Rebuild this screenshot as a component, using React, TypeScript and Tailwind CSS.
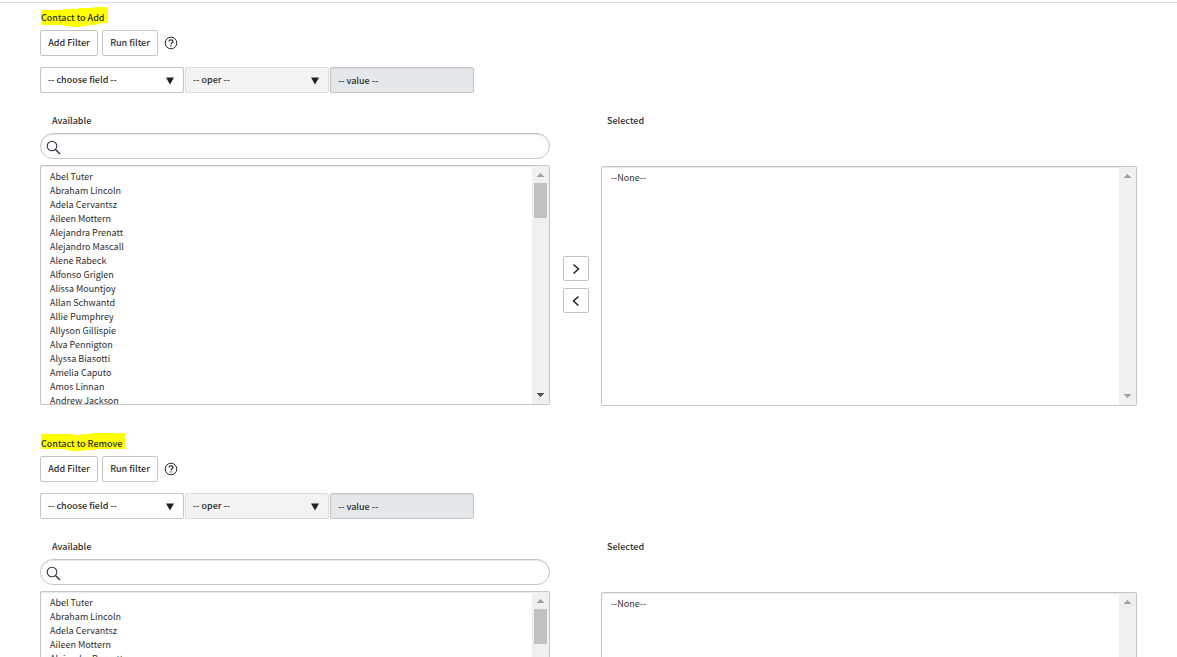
import { useId } from 'react';

const contacts = [
  'Abel Tuter',
  'Abraham Lincoln',
  'Adela Cervantsz',
  'Aileen Mottern',
  'Alejandra Prenatt',
  'Alejandro Mascall',
  'Alene Rabeck',
  'Alfonso Griglen',
  'Alissa Mountjoy',
  'Allan Schwantd',
  'Allie Pumphrey',
  'Allyson Gillispie',
  'Alva Pennigton',
  'Alyssa Biasotti',
  'Amelia Caputo',
  'Amos Linnan',
  'Andrew Jackson',
];

function AddMarker() {
  return (
    <svg className="absolute left-0 top-0 -z-10" width="67" height="22" viewBox="0 0 67 22" aria-hidden="true">
      <path d="M0 3H22V2H37V1H51L54 0H67V16H61L54 18H47V19H42L40 20H31L28 19H22V18H0Z" fill="#ffff00" />
    </svg>
  );
}

function RemoveMarker() {
  return (
    <svg className="absolute left-0 top-0 -z-10" width="84" height="20" viewBox="0 0 84 20" aria-hidden="true">
      <path d="M0 1H33V2H40V1H51V0H82V1H84V16H54V17H42V18H29V17H25V16H0Z" fill="#ffff00" />
    </svg>
  );
}

function Scrollbar({ active }: { active?: boolean }) {
  return (
    <div className="flex w-[17px] shrink-0 flex-col items-center bg-[#f0f0f0]" aria-hidden="true">
      <svg className="shrink-0" width="17" height="17" viewBox="0 0 17 17" shapeRendering="crispEdges">
        <path d="M8 7h1v1h1v1h1v1h1v1H5v-1h1V9h1V8h1z" fill="#a3a3a3" />
      </svg>
      {active && <div className="h-[35px] w-[13px] bg-[#c1c1c1]" />}
      <svg className="mt-auto shrink-0" width="17" height="17" viewBox="0 0 17 17" shapeRendering="crispEdges">
        <path d="M5 6h7v1h-1v1h-1v1H9v1H8V9H7V8H6V7H5z" fill={active ? '#505050' : '#a3a3a3'} />
      </svg>
    </div>
  );
}

function ListBox({ id, items, active }: { id: string; items: string[]; active?: boolean }) {
  return (
    <div className="flex h-60 rounded-xs border border-[#c5c5c5] bg-white shadow-[inset_0_1px_1px_#e8e8e8]">
      <select
        id={id}
        multiple
        className="min-w-0 flex-1 appearance-none overflow-hidden bg-transparent px-[9px] py-1 outline-none"
      >
        {items.map((item) => (
          <option key={item} className="h-[14px] min-h-0 p-0">
            {item}
          </option>
        ))}
      </select>
      <Scrollbar active={active} />
    </div>
  );
}

function Dropdown({ label, muted }: { label: string; muted?: boolean }) {
  return (
    <div className="relative">
      <select
        aria-label={label}
        className={
          muted
            ? 'block h-[26px] w-36 appearance-none rounded-xs border border-[#dcdcdc] bg-[#f3f3f3] px-[7px] leading-4'
            : 'block h-[26px] w-36 appearance-none rounded-xs border border-[#c5c5c5] bg-white px-[7px] leading-4'
        }
      >
        <option>{label}</option>
      </select>
      <svg className="pointer-events-none absolute right-[9px] top-[10px]" width="9" height="8" viewBox="0 0 9 8" aria-hidden="true">
        <path d="M0 0.5H8L4 7.5Z" fill="#222" />
      </svg>
    </div>
  );
}

function ContactSection({ title, marker }: { title: string; marker: React.ReactNode }) {
  const id = useId();

  return (
    <section className="px-10 pb-[27px]">
      <h2 className="relative isolate ml-px flex h-[22px] items-center leading-4 font-medium">
        {marker}
        {title}
      </h2>

      <div className="mt-px flex items-center gap-1">
        <button className="h-[26px] w-[58px] rounded-xs border border-[#c5c5c5] bg-white leading-4">Add Filter</button>
        <button className="h-[26px] w-14 rounded-xs border border-[#c5c5c5] bg-white leading-4">Run filter</button>
        <button aria-label="Help" className="ml-0.5">
          <svg width="14" height="14" viewBox="0 0 14 14" fill="none" stroke="#2e2e2e">
            <circle cx="7" cy="7" r="5.8" />
            <path d="M5 5.6C5 4.4 5.8 3.8 7 3.8s2 .6 2 1.6C9 6.7 7 6.7 7 8.3" strokeWidth="1.2" />
            <path d="M7 9.2v1.3" strokeWidth="1.3" />
          </svg>
        </button>
      </div>

      <div className="mt-[11px] flex gap-px">
        <Dropdown label="-- choose field --" />
        <Dropdown label="-- oper --" muted />
        <input
          aria-label="Value"
          placeholder="-- value --"
          disabled
          className="h-[26px] w-36 rounded-xs border border-[#c5c5c5] bg-[#e4e8eb] px-[7px] leading-4 shadow-[inset_0_1px_1px_#d3d7da] placeholder:text-[#2e2e2e]"
        />
      </div>

      <div className="mt-5 grid grid-cols-[510fr_51px_536fr]">
        <div>
          <label htmlFor={`${id}-available`} className="ml-3 block leading-4">
            Available
          </label>
          <div className="relative mt-1">
            <input
              type="text"
              aria-label="Search available contacts"
              className="block h-[26px] w-full rounded-full border border-[#c5c5c5] bg-white pl-7 pr-3 shadow-[inset_0_1px_1px_#e8e8e8] outline-none"
            />
            <svg
              className="pointer-events-none absolute left-[6px] top-[7px]"
              width="15"
              height="15"
              viewBox="0 0 15 15"
              fill="none"
              stroke="#2e3440"
              aria-hidden="true"
            >
              <circle cx="6" cy="6" r="4.8" strokeWidth="1.1" />
              <path d="M9.5 9.5L14 14" strokeWidth="1.5" />
            </svg>
          </div>
          <div className="mt-1.5">
            <ListBox id={`${id}-available`} items={contacts} active />
          </div>
        </div>

        <div className="flex flex-col items-center gap-[7px] pt-[143px]">
          <button aria-label="Add" className="flex h-[25px] w-[26px] items-center justify-center rounded-xs border border-[#c5c5c5]">
            <svg width="10" height="12" viewBox="0 0 10 12" fill="none" stroke="#222" strokeWidth="1.5">
              <path d="M2.5 1.5L7.5 6L2.5 10.5" />
            </svg>
          </button>
          <button aria-label="Remove" className="flex h-[25px] w-[26px] items-center justify-center rounded-xs border border-[#c5c5c5]">
            <svg width="10" height="12" viewBox="0 0 10 12" fill="none" stroke="#222" strokeWidth="1.5">
              <path d="M7.5 1.5L2.5 6L7.5 10.5" />
            </svg>
          </button>
        </div>

        <div>
          <label htmlFor={`${id}-selected`} className="ml-1.5 block leading-4">
            Selected
          </label>
          <div className="mt-[37px]">
            <ListBox id={`${id}-selected`} items={['--None--']} />
          </div>
        </div>
      </div>
    </section>
  );
}

export default function App() {
  return (
    <main className="h-screen overflow-hidden bg-white pt-0.5 font-['Noto_Sans_CJK_SC',sans-serif] text-[9px] font-medium text-[#2e2e2e]">
      <div className="border-t border-[#dcdcdc] pt-1">
        <ContactSection title="Contact to Add" marker={<AddMarker />} />
        <ContactSection title="Contact to Remove" marker={<RemoveMarker />} />
      </div>
    </main>
  );
}
